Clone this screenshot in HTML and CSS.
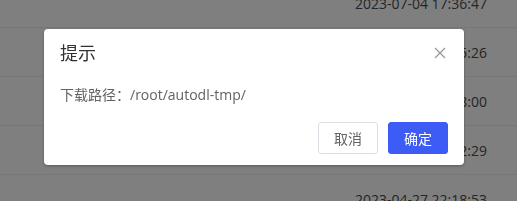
FILE: index.html
```html
<!DOCTYPE html>
<html lang="zh-CN">
<head>
    <meta charset="UTF-8">
    <meta name="viewport" content="width=device-width, initial-scale=1.0">
    <title>下载</title>
    <link rel="stylesheet" href="styles.css">
</head>
<body>
    <div class="file-list">
        <div class="file-row"><span class="file-time">2023-07-04 17:36:47</span></div>
        <div class="file-row"><span class="file-time">2023-07-04 17:35:26</span></div>
        <div class="file-row"><span class="file-time">2023-06-12 10:18:00</span></div>
        <div class="file-row"><span class="file-time">2023-05-08 09:42:29</span></div>
        <div class="file-row"><span class="file-time">2023-04-27 22:18:53</span></div>
    </div>

    <div class="overlay"></div>

    <div class="dialog">
        <div class="dialog-header">
            <span class="dialog-title">提示</span>
            <button class="dialog-close" aria-label="关闭">
                <svg width="12" height="12" viewBox="0 0 12 12">
                    <path d="M1 1 L11 11 M11 1 L1 11" stroke="#909399" stroke-width="1.1" fill="none"/>
                </svg>
            </button>
        </div>
        <div class="dialog-body">下载路径：/root/autodl-tmp/</div>
        <div class="dialog-footer">
            <button class="btn">取消</button>
            <button class="btn btn-primary">确定</button>
        </div>
    </div>
</body>
</html>
```

FILE: styles.css
```css
:root {
    --primary: #3d5cf5;
    --title-color: #303133;
    --text-color: #606266;
    --border-color: #dcdfe6;
}

body {
    margin: 0;
    background-color: #fff;
    font-family: 'Open Sans', 'Noto Sans CJK SC', sans-serif;
    color: var(--text-color);
    overflow: hidden;
}

.file-list {
    margin-top: -21px;
}

.file-row {
    height: 48px;
    border-bottom: 1px solid #ebeef5;
    display: flex;
    align-items: center;
    justify-content: flex-end;
    padding-right: 30px;
    font-size: 14px;
}

.file-time {
    color: #4a4a4a;
}

.overlay {
    position: fixed;
    top: 0;
    left: 0;
    width: 100%;
    height: 100%;
    background: rgba(0, 0, 0, 0.5);
}

.dialog {
    position: fixed;
    top: 29px;
    left: 44px;
    width: 420px;
    background: #fff;
    border-radius: 4px;
    box-shadow: 0 1px 3px rgba(0, 0, 0, 0.3);
}

.dialog-header {
    display: flex;
    justify-content: space-between;
    align-items: center;
    padding: 12px 18px 0 16px;
}

.dialog-title {
    font-size: 18px;
    line-height: 24px;
    color: var(--title-color);
}

.dialog-close {
    background: none;
    border: none;
    padding: 0;
    width: 12px;
    height: 12px;
    display: flex;
    cursor: pointer;
}

.dialog-body {
    padding: 19px 16px 0;
    font-size: 14px;
    line-height: 22px;
    color: var(--text-color);
}

.dialog-footer {
    display: flex;
    justify-content: flex-end;
    gap: 10px;
    padding: 16px 16px 11px;
}

.btn {
    width: 60px;
    height: 32px;
    padding: 0;
    font-family: inherit;
    font-size: 14px;
    color: var(--text-color);
    background: #fff;
    border: 1px solid var(--border-color);
    border-radius: 3px;
    cursor: pointer;
}

.btn-primary {
    background: var(--primary);
    border-color: var(--primary);
    color: #fff;
}
```
